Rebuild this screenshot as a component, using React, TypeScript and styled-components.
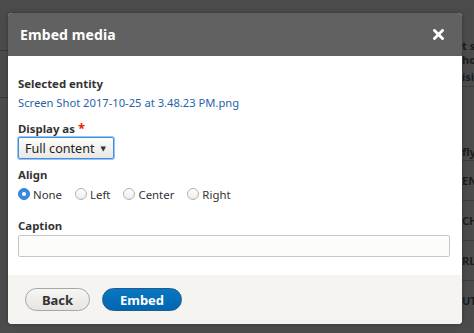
import React from 'react'
import styled, { createGlobalStyle } from 'styled-components'

const GlobalStyle = createGlobalStyle`
  html, body {
    margin: 0;
    padding: 0;
    background: #4b4b4b;
  }
  * {
    box-sizing: border-box;
  }
`

const font = `"Noto Sans", "DejaVu Sans", sans-serif`

const Page = styled.div`
  position: relative;
  width: 474px;
  height: 333px;
  overflow: hidden;
  background: #4b4b4b;
  font-family: ${font};
`

/* dimmed page behind the modal */
const Behind = styled.div`
  display: flex;
  height: 100%;
`

const BehindLeft = styled.div`
  width: 455px;
  display: flex;
  flex-direction: column;
`

const BehindLine = styled.div<{ top: number }>`
  margin-top: ${({ top }) => top}px;
  height: 1px;
  width: 20px;
  background: #3a3a3a;
`

const BehindRight = styled.div`
  flex: 1;
  display: flex;
  flex-direction: column;
  padding-top: 38px;
  overflow: hidden;
`

const BehindRow = styled.div<{ h: number; line?: boolean }>`
  height: ${({ h }) => h}px;
  display: flex;
  align-items: center;
  padding-left: 7px;
  border-top: ${({ line }) => (line ? '1px solid #3c3c3c' : 'none')};
  color: #1c1c1c;
  font-size: 11px;
  line-height: 1;
  font-weight: 700;
  white-space: nowrap;
`

const Dialog = styled.div`
  position: absolute;
  top: 13px;
  left: 8px;
  width: 454px;
  height: 311px;
  border-radius: 4px;
  overflow: hidden;
  background: #fff;
  display: flex;
  flex-direction: column;
  box-shadow: 0 0 4px rgba(0, 0, 0, 0.3);
`

const Header = styled.div`
  height: 43px;
  background: #616161;
  display: flex;
  align-items: center;
  justify-content: space-between;
  padding: 0 18px 0 12px;
  color: #fff;
`

const Title = styled.h1`
  margin: 0;
  font-size: 14px;
  font-weight: 700;
  letter-spacing: 0.1px;
`

const CloseIcon = styled.svg`
  width: 11px;
  height: 11px;
  display: block;
`

const Body = styled.div`
  flex: 1;
  padding: 20px 10px 0;
  display: flex;
  flex-direction: column;
`

const Label = styled.div<{ gap: number }>`
  margin-top: ${({ gap }) => gap}px;
  height: 16px;
  line-height: 16px;
  font-size: 11.4px;
  font-weight: 700;
  color: #333;
`

const Required = styled.span`
  color: #e32700;
  margin-left: 3px;
  font-size: 13px;
`

const Link = styled.a`
  margin-top: 3px;
  height: 16px;
  line-height: 16px;
  font-size: 11.2px;
  color: #1f64aa;
  text-decoration: none;
`

const Select = styled.div`
  margin-top: 1px;
  width: 96px;
  height: 22px;
  display: flex;
  align-items: center;
  justify-content: space-between;
  padding: 0 7px 0 6px;
  border: 1px solid #3b8ee0;
  border-radius: 2px;
  box-shadow: 0 0 0 1px #9cc4ef;
  background: linear-gradient(#fcfcfa, #e9e8e4);
  font-size: 12.6px;
  color: #222;
`

const Caret = styled.span`
  font-size: 7px;
  color: #333;
`

const Radios = styled.div`
  margin-top: 3px;
  height: 16px;
  display: flex;
  align-items: center;
  gap: 13px;
`

const RadioItem = styled.label`
  display: flex;
  align-items: center;
  gap: 3px;
  font-size: 11.4px;
  color: #333;
`

const Circle = styled.span<{ checked?: boolean }>`
  width: 12px;
  height: 12px;
  border-radius: 50%;
  border: 1px solid ${({ checked }) => (checked ? '#2f7fd6' : '#b3b3b3')};
  background: ${({ checked }) => (checked ? '#3a8bdf' : 'linear-gradient(#fff, #ededed)')};
  display: flex;
  align-items: center;
  justify-content: center;
  &::after {
    content: '';
    width: 4px;
    height: 4px;
    border-radius: 50%;
    background: #fff;
    display: ${({ checked }) => (checked ? 'block' : 'none')};
  }
`

const Input = styled.div`
  margin-top: 1px;
  width: 432px;
  height: 22px;
  border: 1px solid #c6c6c6;
  border-radius: 2px;
  background: #fcfcfa;
`

const Footer = styled.div`
  height: 49px;
  background: #f5f4f1;
  display: flex;
  align-items: center;
  gap: 12px;
  padding: 0 0 0 17px;
`

const Button = styled.button<{ primary?: boolean }>`
  height: 23px;
  width: ${({ primary }) => (primary ? 80 : 65)}px;
  border-radius: 12px;
  font-family: ${font};
  font-size: 13px;
  font-weight: 700;
  padding: 0;
  color: ${({ primary }) => (primary ? '#fff' : '#333')};
  border: 1px solid ${({ primary }) => (primary ? '#1e5c90' : '#a6a6a6')};
  background: ${({ primary }) =>
    primary ? 'linear-gradient(#0a76c1, #0067b0)' : 'linear-gradient(#f6f6f3, #e6e5e1)'};
`

const behindRows = [
  { h: 14, text: 't s' },
  { h: 14, text: 'ho' },
  { h: 20, text: 'isi' },
  { h: 56, text: '', line: true },
  { h: 18, text: 'fly' },
  { h: 40, text: 'EN', line: true },
  { h: 40, text: 'CH', line: true },
  { h: 40, text: 'RL', line: true },
  { h: 40, text: 'UT', line: true },
]

export default function App() {
  return (
    <Page>
      <GlobalStyle />
      <Behind>
        <BehindLeft>
          <BehindLine top={50} />
          <BehindLine top={46} />
        </BehindLeft>
        <BehindRight>
          {behindRows.map((r, i) => (
            <BehindRow key={i} h={r.h} line={r.line}>
              {r.text}
            </BehindRow>
          ))}
        </BehindRight>
      </Behind>
      <Dialog>
        <Header>
          <Title>Embed media</Title>
          <CloseIcon viewBox="0 0 11 11">
            <path d="M1.5 1.5 L9.5 9.5 M9.5 1.5 L1.5 9.5" stroke="#fff" strokeWidth="2.8" strokeLinecap="square" />
          </CloseIcon>
        </Header>
        <Body>
          <Label gap={0}>Selected entity</Label>
          <Link href="#">Screen Shot 2017-10-25 at 3.48.23 PM.png</Link>
          <Label gap={9}>
            Display as<Required>*</Required>
          </Label>
          <Select>
            Full content <Caret>▼</Caret>
          </Select>
          <Label gap={8}>Align</Label>
          <Radios>
            <RadioItem>
              <Circle checked />
              None
            </RadioItem>
            <RadioItem>
              <Circle />
              Left
            </RadioItem>
            <RadioItem>
              <Circle />
              Center
            </RadioItem>
            <RadioItem>
              <Circle />
              Right
            </RadioItem>
          </Radios>
          <Label gap={16}>Caption</Label>
          <Input />
        </Body>
        <Footer>
          <Button>Back</Button>
          <Button primary>Embed</Button>
        </Footer>
      </Dialog>
    </Page>
  )
}
